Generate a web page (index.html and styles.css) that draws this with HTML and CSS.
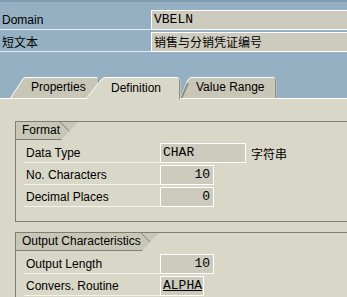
FILE: index.html
```html
<!DOCTYPE html>
<html>
<head>
<meta charset="utf-8">
<link rel="stylesheet" href="styles.css">
</head>
<body>
<div class="topline"></div>
<div class="header">
  <div class="hrow">
    <div class="hlabel">Domain</div>
    <div class="hfield mono">VBELN</div>
  </div>
  <div class="hrow">
    <div class="hlabel cjk">短文本</div>
    <div class="hfield cjk">销售与分销凭证编号</div>
  </div>
</div>
<div class="tabs">
  <div class="tab tab-props">
    <svg width="90" height="21" viewBox="0 0 90 21">
      <path d="M0.5 21 L13 2 Q14 0.5 16 0.5 L87 0.5 Q89.5 0.5 89.5 3 L89.5 21 Z" fill="#c8c6b6"/>
      <path d="M0.5 21 L13 2 Q14 0.5 16 0.5 L87 0.5" fill="none" stroke="#ffffff"/>
      <path d="M88.5 1.5 L88.5 21" fill="none" stroke="#8e8d80"/>
    </svg>
    <span>Properties</span>
  </div>
  <div class="tab tab-def">
    <svg width="95" height="22" viewBox="0 0 95 22">
      <path d="M0.5 22 L15 3 Q17 0.5 20 0.5 L92 0.5 Q94.5 0.5 94.5 3 L94.5 22 Z" fill="#d9d7c7"/>
      <path d="M0.5 21.5 L15 3 Q17 0.5 20 0.5 L92 0.5" fill="none" stroke="#ffffff"/>
      <path d="M93.5 2 L93.5 22" fill="none" stroke="#8e8d80"/>
    </svg>
    <span>Definition</span>
  </div>
  <div class="tab tab-val">
    <svg width="97" height="21" viewBox="0 0 97 21">
      <path d="M0.5 21 L8 3 Q9 0.5 12 0.5 L94 0.5 Q96.5 0.5 96.5 3 L96.5 21 Z" fill="#c8c6b6"/>
      <path d="M0.5 21 L8 3 Q9 0.5 12 0.5 L94 0.5" fill="none" stroke="#ffffff"/>
      <path d="M1.5 21 L8 6" fill="none" stroke="#8e8d80" stroke-width="2"/>
      <path d="M95.5 2 L95.5 21" fill="none" stroke="#8e8d80"/>
    </svg>
    <span>Value Range</span>
  </div>
</div>
<div class="panel">
  <div class="group g1">
    <div class="gtitle"><span>Format</span></div>
    <div class="frow">
      <div class="flabel">Data Type</div>
      <div class="field mono w86">CHAR</div>
      <div class="after cjk">字符串</div>
    </div>
    <div class="frow">
      <div class="flabel">No. Characters</div>
      <div class="field mono w54 right">10</div>
    </div>
    <div class="frow">
      <div class="flabel">Decimal Places</div>
      <div class="field mono w54 right">0</div>
    </div>
  </div>
  <div class="group g2">
    <div class="gtitle"><span>Output Characteristics</span></div>
    <div class="frow">
      <div class="flabel">Output Length</div>
      <div class="field mono w54 right">10</div>
    </div>
    <div class="frow">
      <div class="flabel">Convers. Routine</div>
      <div class="field mono w44 link">ALPHA</div>
    </div>
  </div>
</div>
</body>
</html>
```

FILE: styles.css
```css
html, body {
  margin: 0;
  padding: 0;
}
body {
  width: 347px;
  height: 297px;
  overflow: hidden;
  background: #94b0c2;
  font-family: "Liberation Sans", Arial, sans-serif;
  font-size: 12px;
  color: #000;
}
.mono {
  font-family: "Liberation Mono", "Courier New", monospace;
  font-size: 13px;
}
.cjk {
  font-family: "Noto Sans CJK SC", sans-serif;
  font-size: 12px;
}
.topline {
  height: 2px;
  background: #7f9bae;
}
.header {
  padding-top: 8px;
  display: flex;
  flex-direction: column;
  gap: 2px;
}
.hrow {
  display: flex;
  height: 20px;
}
.hlabel {
  flex: none;
  width: 151px;
  box-sizing: border-box;
  padding-left: 2px;
  border-bottom: 1px solid #e4ecf0;
  line-height: 20px;
}
.hfield {
  flex: 1;
  box-sizing: border-box;
  height: 20px;
  border: 1px solid #ffffff;
  border-right: none;
  background: #cdcbbd;
  padding-left: 2px;
  line-height: 18px;
}
.tabs {
  margin-top: 25px;
  height: 21px;
  display: flex;
  align-items: flex-end;
  padding-left: 10px;
}
.tab {
  position: relative;
  height: 21px;
  flex: none;
}
.tab svg {
  position: absolute;
  left: 0;
  top: 0;
}
.tab span {
  position: relative;
  display: block;
  line-height: 21px;
}
.tab-props {
  width: 90px;
}
.tab-props span {
  padding-left: 21px;
}
.tab-def {
  width: 95px;
  height: 22px;
  margin-left: -14px;
  margin-bottom: -1px;
  z-index: 2;
}
.tab-def span {
  padding-left: 25px;
  line-height: 22px;
}
.tab-val {
  width: 97px;
  margin-left: -1px;
}
.tab-val span {
  padding-left: 16px;
}
.panel {
  box-sizing: border-box;
  background: #d9d7c7;
  border-top: 1px solid #ffffff;
  height: 199px;
  padding-top: 22px;
  padding-left: 15px;
  display: flex;
  flex-direction: column;
  gap: 10px;
}
.group {
  border: 1px solid #7f7e73;
  border-right: none;
  flex: none;
}
.g1 {
  height: 99px;
}
.g2 {
  flex: 1;
  border-bottom: none;
}
.gtitle {
  height: 18px;
  display: flex;
}
.gtitle span {
  display: block;
  background: #c8c6b6;
  border-bottom: 1px solid #7f7e73;
  line-height: 17px;
  padding-left: 6px;
  padding-right: 18px;
  clip-path: polygon(0 0, 100% 0, calc(100% - 17px) 100%, 0 100%);
  position: relative;
}
.gtitle span::after {
  content: "";
  position: absolute;
  right: 0;
  top: 0;
  width: 18px;
  height: 18px;
  background: linear-gradient(to top right, transparent calc(50% - 0.8px), #8e8d80 50%, transparent calc(50% + 0.8px));
}
.frow {
  display: flex;
  align-items: center;
  margin-left: 8px;
  margin-top: 3px;
  height: 20px;
}
.frow + .frow {
  margin-top: 2px;
}
.flabel {
  flex: none;
  width: 136px;
  box-sizing: border-box;
  height: 20px;
  line-height: 20px;
  padding-left: 2px;
  border-bottom: 1px solid #f4f3ea;
}
.field {
  flex: none;
  box-sizing: border-box;
  height: 20px;
  border: 1px solid #ffffff;
  background: #cdcbbd;
  line-height: 18px;
  padding: 0 3px 0 2px;
}
.w86 { width: 86px; }
.w54 { width: 54px; }
.w44 { width: 44px; }
.right { text-align: right; }
.link { text-decoration: underline; }
.after {
  padding-left: 5px;
}
```
